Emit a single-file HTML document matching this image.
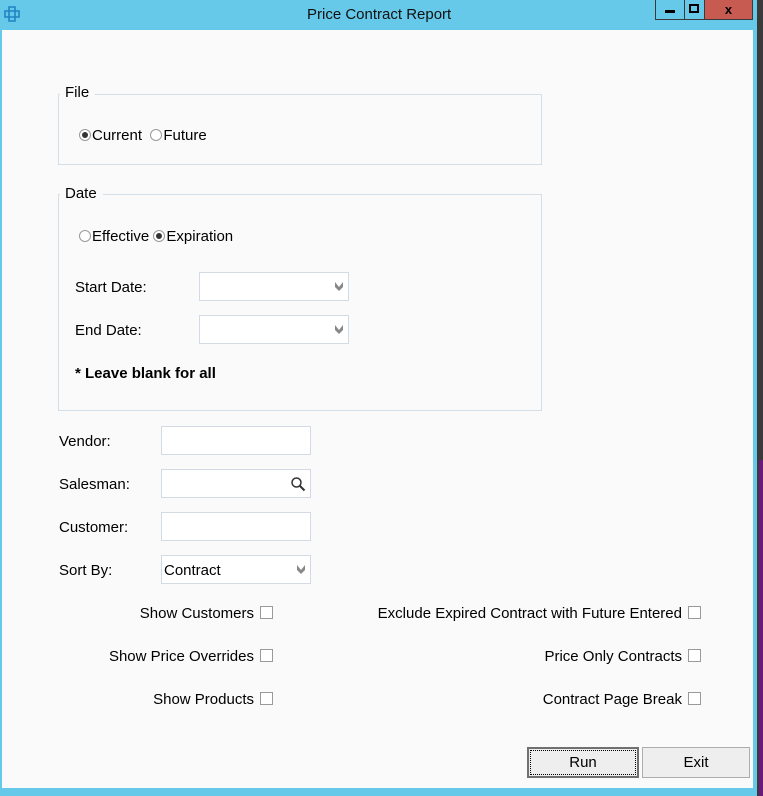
<!DOCTYPE html>
<html><head><style>
*{margin:0;padding:0;box-sizing:border-box}
body{width:763px;height:796px;background:#66c9e9;position:relative;overflow:hidden;font-family:"Liberation Sans",sans-serif;font-size:15px;color:#000;letter-spacing:0}
.a{position:absolute;white-space:nowrap}
#client{position:absolute;left:2px;top:30px;width:751px;height:758px;background:#fafafa}
.gb{position:absolute;border:1px solid #d5dfe8}
.gt{position:absolute;background:#fafafa;padding:0 6px 0 5px}
.inp{position:absolute;background:#fff;border:1px solid #d2dbe3}
.cb{position:absolute;width:13px;height:13px;border:1px solid #9a9a9a;background:#fff}
.rd{display:inline-block;width:12px;height:12px;border:1px solid #9a9a9a;border-radius:50%;vertical-align:-1px;position:relative;background:#fff;margin-right:1px}
.rd.on::after{content:"";position:absolute;left:2px;top:2px;width:6px;height:6px;border-radius:50%;background:#333}
.chev{position:absolute;right:4px;top:7px}
.btn{position:absolute;height:31px;background:#eeeeee;border:1px solid #adadad;text-align:center;line-height:29px}
.t{margin-top:1px}
</style></head><body>
<svg class="a" style="left:4px;top:6px" width="16" height="16" viewBox="0 0 16 16"><path d="M5 1h6v4h4v6h-4v4H5v-4H1V5h4z M5 5v6h6V5z" fill="none" stroke="#1f84c3" stroke-width="1.6"/></svg>
<div class="a" style="left:307px;top:6px;font-size:15px;color:#111">Price Contract Report</div>
<div class="a" style="left:655px;top:0;width:30px;height:20px;background:#66c9e9;border:1px solid #3a3a3a;border-top:none"><div class="a" style="left:9px;top:10px;width:10px;height:3px;background:#000"></div></div>
<div class="a" style="left:684px;top:0;width:21px;height:20px;border:1px solid #3a3a3a;border-top:none;border-left:none"><div class="a" style="left:5px;top:4px;width:10px;height:9px;border:2px solid #000"></div></div>
<div class="a" style="left:705px;top:0;width:48px;height:20px;background:#c75b51;border-bottom:1px solid #3a3a3a;border-right:1px solid #3a3a3a;text-align:center;font-weight:bold;font-size:13px;line-height:19px">x</div>
<div class="a" style="left:757px;top:0;width:6px;height:796px;background:#3a3a3a"></div>
<div class="a" style="left:759px;top:460px;width:4px;height:336px;background:#6a1a78"></div>
<div id="client"></div>

<div class="gb" style="left:58px;top:94px;width:484px;height:71px"></div>
<div class="gt" style="left:60px;top:84px">File</div>
<div class="a" style="left:79px;top:127px"><span class="rd on"></span>Current&nbsp;&nbsp;<span class="rd"></span>Future</div>

<div class="gb" style="left:58px;top:194px;width:484px;height:217px"></div>
<div class="gt" style="left:60px;top:185px">Date</div>
<div class="a" style="left:79px;top:228px"><span class="rd"></span>Effective&nbsp;<span class="rd on"></span>Expiration</div>
<div class="a" style="left:75px;top:279px">Start Date:</div>
<div class="inp" style="left:199px;top:272px;width:150px;height:29px"><svg class="chev" width="10" height="12" viewBox="0 0 10 12"><path d="M1 2l4 5 4-5v5l-4 4-4-4z" fill="#888"/></svg></div>
<div class="a" style="left:75px;top:322px">End Date:</div>
<div class="inp" style="left:199px;top:315px;width:150px;height:29px"><svg class="chev" width="10" height="12" viewBox="0 0 10 12"><path d="M1 2l4 5 4-5v5l-4 4-4-4z" fill="#888"/></svg></div>
<div class="a" style="left:75px;top:365px;font-weight:bold">* Leave blank for all</div>

<div class="a" style="left:59px;top:433px">Vendor:</div>
<div class="inp" style="left:161px;top:426px;width:150px;height:29px"></div>
<div class="a" style="left:59px;top:476px">Salesman:</div>
<div class="inp" style="left:161px;top:469px;width:150px;height:29px"><svg class="a" style="right:4px;top:6px" width="16" height="16" viewBox="0 0 16 16"><circle cx="6.5" cy="6.5" r="4.5" fill="none" stroke="#333" stroke-width="1.5"/><path d="M10 10l4.5 4.5" stroke="#333" stroke-width="2"/></svg></div>
<div class="a" style="left:59px;top:519px">Customer:</div>
<div class="inp" style="left:161px;top:512px;width:150px;height:29px"></div>
<div class="a" style="left:59px;top:562px">Sort By:</div>
<div class="inp" style="left:161px;top:555px;width:150px;height:29px"><span class="a" style="left:2px;top:6px">Contract</span><svg class="chev" width="10" height="12" viewBox="0 0 10 12"><path d="M1 2l4 5 4-5v5l-4 4-4-4z" fill="#888"/></svg></div>

<div class="a" style="right:509px;top:605px">Show Customers</div><div class="cb" style="left:260px;top:606px"></div>
<div class="a" style="right:509px;top:648px">Show Price Overrides</div><div class="cb" style="left:260px;top:649px"></div>
<div class="a" style="right:509px;top:691px">Show Products</div><div class="cb" style="left:260px;top:692px"></div>
<div class="a" style="right:81px;top:605px">Exclude Expired Contract with Future Entered</div><div class="cb" style="left:688px;top:606px"></div>
<div class="a" style="right:81px;top:648px">Price Only Contracts</div><div class="cb" style="left:688px;top:649px"></div>
<div class="a" style="right:81px;top:691px">Contract Page Break</div><div class="cb" style="left:688px;top:692px"></div>

<div class="btn" style="left:527px;top:747px;width:112px;border:2px solid #707070;line-height:28px"><div class="a" style="left:1px;top:1px;right:1px;bottom:1px;border:1px dotted #000"></div>Run</div>
<div class="btn" style="left:642px;top:747px;width:108px;line-height:30px">Exit</div>
</body></html>
